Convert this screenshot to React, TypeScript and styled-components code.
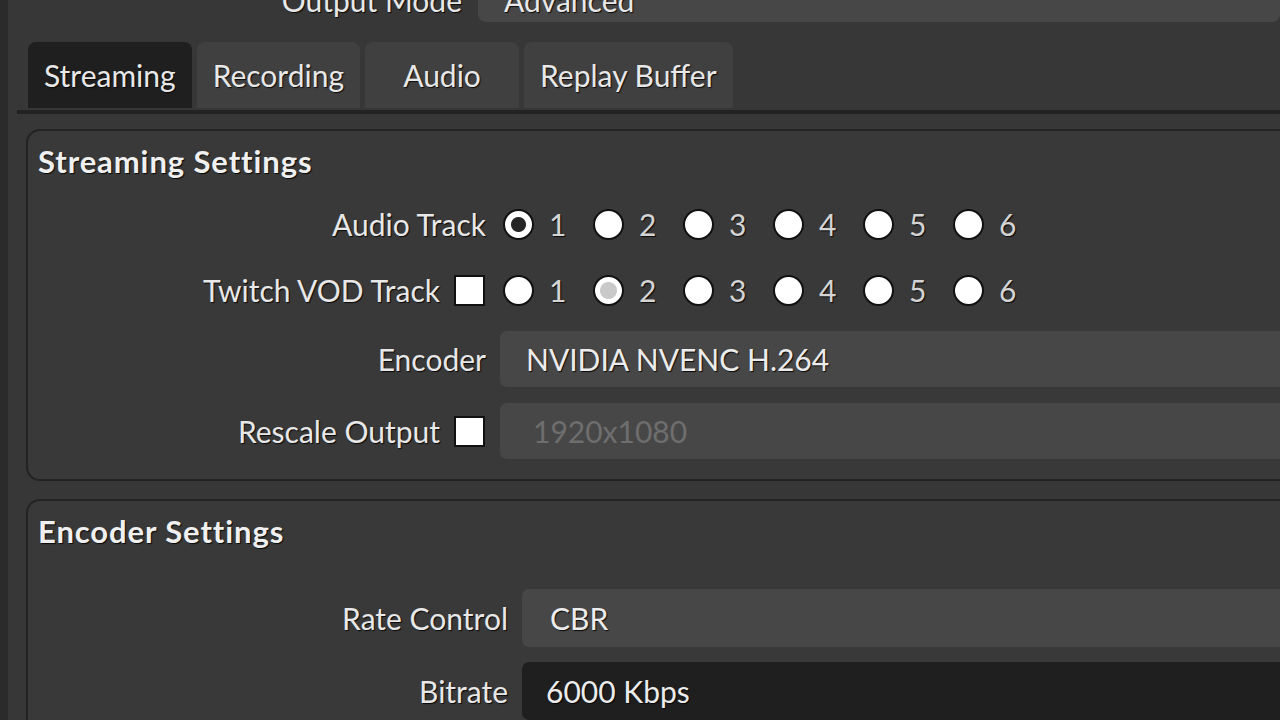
import React from 'react'
import styled, { createGlobalStyle } from 'styled-components'

const GlobalStyle = createGlobalStyle`
  html, body {
    margin: 0;
    padding: 0;
    background: #373737;
  }
  * { box-sizing: border-box; }
`

const Window = styled.div`
  width: 1280px;
  height: 720px;
  overflow: hidden;
  background: #373737;
  border-left: 8px solid #2b2b2b;
  font-family: Lato, "Open Sans", sans-serif;
  font-size: 30px;
  color: #e8e8e8;
  text-shadow: 1px 1px 1px rgba(0, 0, 0, 0.85);
`

const ModeRow = styled.div`
  display: flex;
  align-items: center;
  height: 44px;
  margin-top: -22px;
`

const ModeLabel = styled.div`
  width: 454px;
  text-align: right;
`

const ModeValue = styled.div`
  flex: 1;
  height: 44px;
  margin-left: 16px;
  padding-left: 26px;
  display: flex;
  align-items: center;
  background: #474747;
  border-radius: 0 0 8px 8px;
`

const TabBar = styled.div`
  display: flex;
  gap: 5px;
  margin-top: 20px;
  padding-left: 20px;
`

const Tab = styled.div<{ $active?: boolean }>`
  min-width: 154px;
  height: 66px;
  padding: 0 16px;
  display: flex;
  align-items: center;
  justify-content: center;
  border-radius: 8px 8px 0 0;
  background: ${p => (p.$active ? '#1f1f1f' : '#404040')};
`

const PaneLine = styled.div`
  height: 4px;
  margin: 2px 0 0 9px;
  background: #222;
`

const Group = styled.section<{ $top: number }>`
  margin: ${p => p.$top}px -30px 0 18px;
  border: 2px solid #232323;
  border-radius: 14px;
  background: #393939;
  padding: 0 0 20px 0;
`

const GroupTitle = styled.h2<{ $pad: number }>`
  margin: 0;
  padding: ${p => p.$pad}px 0 0 10px;
  height: ${p => p.$pad + 36}px;
  line-height: 36px;
  font-size: 31px;
  font-weight: 700;
  letter-spacing: 0.9px;
  color: #f0f0f0;
`

const Rows = styled.div<{ $top: number; $gap: number }>`
  display: flex;
  flex-direction: column;
  gap: ${p => p.$gap}px;
  margin-top: ${p => p.$top}px;
`

const Row = styled.div<{ $h: number; $labelW: number }>`
  display: grid;
  grid-template-columns: ${p => p.$labelW}px 1fr;
  column-gap: 14px;
  height: ${p => p.$h}px;
  align-items: center;
`

const Label = styled.div`
  display: flex;
  align-items: center;
  justify-content: flex-end;
  gap: 14px;
  height: 100%;
`

const Checkbox = styled.span`
  display: inline-block;
  width: 31px;
  height: 31px;
  background: #fff;
  border: 2px solid #111;
  margin-right: 1px;
`

const RadioGroup = styled.div`
  display: flex;
  padding-left: 3px;
`

const RadioItem = styled.div`
  width: 90px;
  display: flex;
  align-items: center;
  gap: 15px;
  color: #d4d4d4;
`

const Radio = styled.span<{ $state: 'off' | 'on' | 'mixed' }>`
  display: inline-block;
  width: 31px;
  height: 31px;
  border-radius: 50%;
  border: 2px solid #111;
  background: ${p =>
    p.$state === 'on'
      ? 'radial-gradient(circle, #262626 0 7px, #fff 8px)'
      : p.$state === 'mixed'
        ? 'radial-gradient(circle, #c9c9c9 0 8px, #fff 9px)'
        : '#fff'};
`

const Field = styled.div<{ $dark?: boolean; $disabled?: boolean; $pad: number }>`
  height: 100%;
  display: flex;
  align-items: center;
  padding-left: ${p => p.$pad}px;
  border-radius: 7px;
  background: ${p => (p.$dark ? '#1f1f1f' : '#474747')};
  color: ${p => (p.$disabled ? '#6e6e6e' : '#ececec')};
  text-shadow: ${p => (p.$disabled ? 'none' : '1px 1px 1px rgba(0,0,0,0.85)')};
`

const tracks = [1, 2, 3, 4, 5, 6]

function TrackRadios({ checked, mixed }: { checked?: number; mixed?: number }) {
  return (
    <RadioGroup>
      {tracks.map(n => (
        <RadioItem key={n}>
          <Radio $state={n === checked ? 'on' : n === mixed ? 'mixed' : 'off'} />
          {n}
        </RadioItem>
      ))}
    </RadioGroup>
  )
}

export default function App() {
  return (
    <>
      <GlobalStyle />
      <Window>
        <ModeRow>
          <ModeLabel>Output Mode</ModeLabel>
          <ModeValue>Advanced</ModeValue>
        </ModeRow>

        <TabBar>
          <Tab $active>Streaming</Tab>
          <Tab>Recording</Tab>
          <Tab>Audio</Tab>
          <Tab>Replay Buffer</Tab>
        </TabBar>
        <PaneLine />

        <Group $top={15}>
          <GroupTitle $pad={12}>Streaming Settings</GroupTitle>
          <Rows $top={20} $gap={16}>
            <Row $h={50} $labelW={458}>
              <Label>Audio Track</Label>
              <TrackRadios checked={1} />
            </Row>
            <Row $h={50} $labelW={458}>
              <Label>
                Twitch VOD Track <Checkbox />
              </Label>
              <TrackRadios mixed={2} />
            </Row>
            <Row $h={56} $labelW={458}>
              <Label>Encoder</Label>
              <Field $pad={26}>NVIDIA NVENC H.264</Field>
            </Row>
            <Row $h={56} $labelW={458}>
              <Label>
                Rescale Output <Checkbox />
              </Label>
              <Field $pad={33} $disabled>1920x1080</Field>
            </Row>
          </Rows>
        </Group>

        <Group $top={18}>
          <GroupTitle $pad={12}>Encoder Settings</GroupTitle>
          <Rows $top={40} $gap={15}>
            <Row $h={58} $labelW={480}>
              <Label>Rate Control</Label>
              <Field $pad={28}>CBR</Field>
            </Row>
            <Row $h={58} $labelW={480}>
              <Label>Bitrate</Label>
              <Field $pad={24} $dark>6000 Kbps</Field>
            </Row>
          </Rows>
        </Group>
      </Window>
    </>
  )
}
